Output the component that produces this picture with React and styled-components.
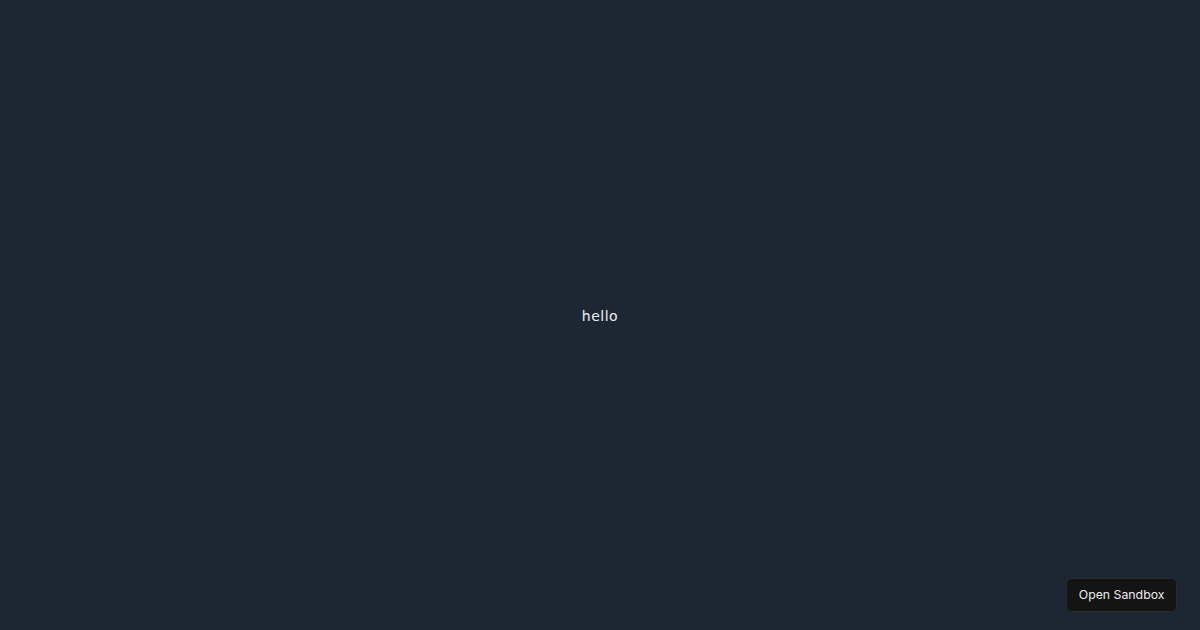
import React from "react";
import styled, { createGlobalStyle } from "styled-components";

const Global = createGlobalStyle`
  html, body { margin: 0; padding: 0; height: 100%; background: #1c2733; }
  #root { height: 100%; }
`;

const Page = styled.div`
  width: 100vw;
  height: 100vh;
  background: #1c2733;
  display: flex;
  align-items: center;
  justify-content: center;
  position: relative;
`;

const Greeting = styled.span`
  font-family: "DejaVu Sans", sans-serif;
  font-size: 14px;
  color: #f0f0f0;
  letter-spacing: 0.5px;
  padding-top: 2px;
`;

const SandboxButton = styled.button`
  position: absolute;
  right: 23px;
  bottom: 18px;
  height: 34px;
  padding: 0 11.5px 2px;
  background: #141414;
  color: #ececec;
  border: 1px solid #2a2c2f;
  border-radius: 5px;
  font-family: Inter, "Liberation Sans", sans-serif;
  font-size: 12.3px;
  cursor: pointer;
`;

export default function App() {
  return (
    <>
      <Global />
      <Page>
        <Greeting>hello</Greeting>
        <SandboxButton>Open Sandbox</SandboxButton>
      </Page>
    </>
  );
}
